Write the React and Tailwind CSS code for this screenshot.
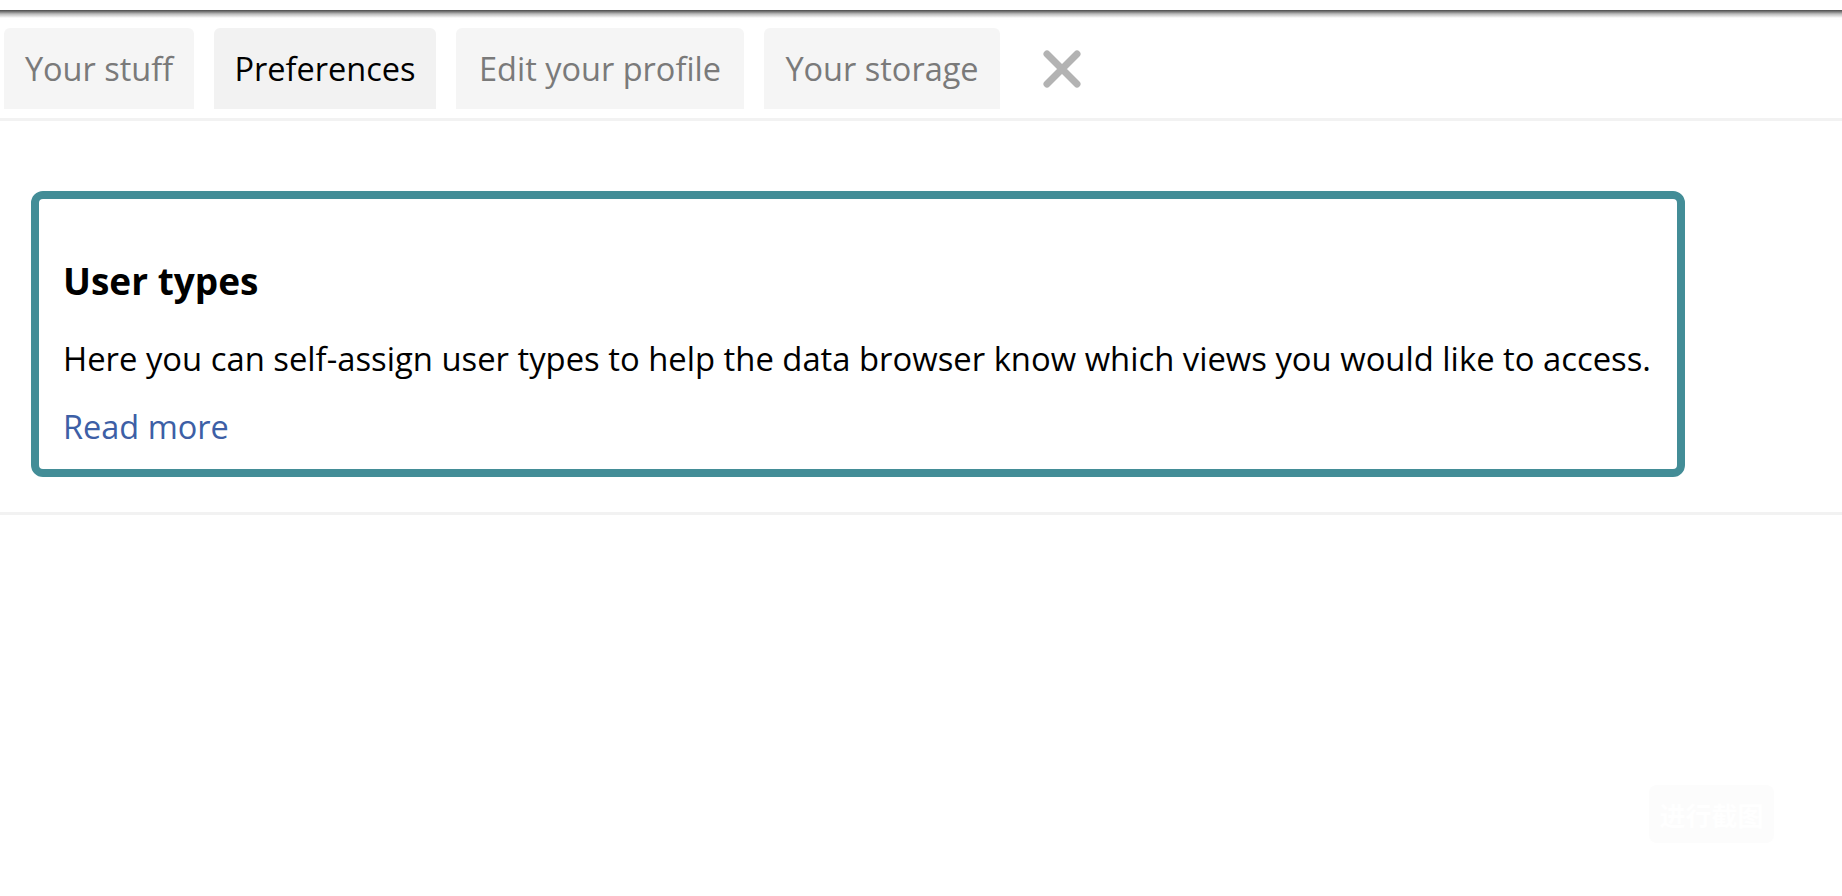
import React from 'react';

const tabs = [
  { label: 'Your stuff', width: 'w-[190px]' },
  { label: 'Preferences', width: 'w-[222px]', active: true },
  { label: 'Edit your profile', width: 'w-[288px]' },
  { label: 'Your storage', width: 'w-[236px]' },
];

const CloseIcon = () => (
  <svg width="40" height="40" viewBox="0 0 40 40" className="ml-[22px]">
    <path d="M5 5 L35 35 M35 5 L5 35" stroke="#b3b3b3" strokeWidth="7" strokeLinecap="round" fill="none" />
  </svg>
);

export default function App() {
  return (
    <div className="relative min-h-[896px] bg-white font-['Open_Sans',sans-serif]">
      <div className="h-[10px]" />
      <div className="h-[8px] bg-linear-to-b from-[#4a4a4a] via-[#bdbdbd] to-white" />

      {/* tab bar */}
      <div className="pt-[10px] pb-[9px] border-b-[3px] border-[#f2f2f2]">
        <div className="flex items-center gap-[20px] pl-[4px]">
          {tabs.map((tab) => (
            <div
              key={tab.label}
              className={`${tab.width} h-[81px] pt-[2px] flex items-center justify-center rounded-t-[6px] text-[32.5px] leading-none ${
                tab.active ? 'bg-[#f2f2f2] text-black' : 'bg-[#f5f5f5] text-[#7a7a7a]'
              }`}
            >
              {tab.label}
            </div>
          ))}
          <CloseIcon />
        </div>
      </div>

      {/* preferences */}
      <div className="pt-[70px] pl-[31px]">
        <div className="w-[1654px] h-[286px] border-[8px] border-[#438d97] rounded-[12px] pl-[24px] pt-[58px]">
          <h2 className="text-[37px] leading-[48px] font-bold text-black">User types</h2>
          <p className="mt-[32px] text-[32.8px] leading-[44px] text-black whitespace-nowrap">
            Here you can self-assign user types to help the data browser know which views you would like to access.
          </p>
          <a className="block mt-[24px] text-[32.5px] leading-[44px] text-[#3d5fa6]">Read more</a>
        </div>
      </div>

      <div className="mt-[35px] h-[3px] bg-[#f2f2f2]" />

      <div className="absolute left-[1649px] top-[785px] w-[125px] h-[58px] rounded-[8px] bg-[#fcfcfc] flex items-center justify-center text-white text-[26px] font-bold font-['Noto_Sans_CJK_SC',sans-serif]">
        进行截图
      </div>
    </div>
  );
}
